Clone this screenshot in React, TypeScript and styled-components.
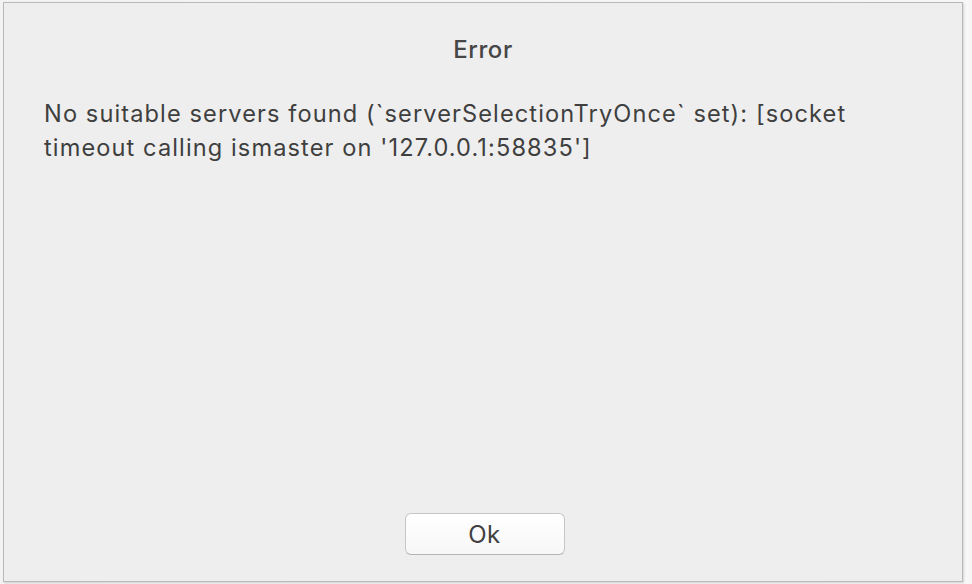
import React from "react";
import styled, { createGlobalStyle } from "styled-components";

const Global = createGlobalStyle`
  html, body { margin: 0; padding: 0; }
  body {
    width: 972px; height: 584px; overflow: hidden;
    background: #f6f6f6;
    font-family: Inter, "Noto Sans", "Liberation Sans", sans-serif;
  }
`;

const Page = styled.div`
  position: relative;
  width: 972px;
  height: 584px;
  overflow: hidden;
  background: linear-gradient(90deg, #f3f3f3, #f7f7f7);
`;

const BackTitle = styled.div`
  display: flex;
  align-items: flex-end;
  gap: 10px;
  height: 4px;
  overflow: visible;
  margin-top: -16px;
  font-size: 24px;
  line-height: 26px;
  color: #222;
  white-space: nowrap;
`;

const RedMark = styled.span`
  display: inline-block;
  width: 44px;
  height: 24px;
  border-left: 1px solid #e04040;
  border-right: 1px solid #e04040;
  margin-left: 8px;
`;

const Dialog = styled.div`
  position: absolute;
  left: 3px;
  top: 2px;
  width: 960px;
  height: 580px;
  box-sizing: border-box;
  background: #eeeeee;
  border: 1px solid #b9b9b9;
  box-shadow: 1px 1px 2px rgba(0,0,0,0.15);
  display: flex;
  flex-direction: column;
  align-items: stretch;
`;

const Title = styled.h1`
  margin: 33px 0 0;
  text-align: center;
  font-size: 24px;
  font-weight: 500;
  letter-spacing: 0.6px;
  line-height: 28px;
  color: #464646;
`;

const Message = styled.p`
  margin: 33px 0 0;
  padding: 0 38px 0 40px;
  font-size: 23.6px;
  letter-spacing: 1.1px;
  line-height: 34px;
  color: #3f3f3f;
  flex: 1;
`;

const Footer = styled.div`
  display: flex;
  justify-content: center;
  padding-bottom: 26px;
`;

const OkButton = styled.button`
  width: 160px;
  height: 42px;
  border-radius: 6px;
  border: 1px solid #c6c6c6;
  border-bottom-color: #b4b4b4;
  background: linear-gradient(#ffffff, #f7f7f7);
  font-family: inherit;
  font-size: 24px;
  letter-spacing: 0.6px;
  color: #404040;
  padding: 0;
  margin-left: 3px;
`;

export default function App() {
  return (
    <Page>
      <Global />
      <BackTitle>
        <span>al Modal Error</span>
        <RedMark />
      </BackTitle>
      <Dialog>
        <Title>Error</Title>
        <Message>
          No suitable servers found (`serverSelectionTryOnce` set): [socket timeout calling ismaster on '127.0.0.1:58835']
        </Message>
        <Footer>
          <OkButton>Ok</OkButton>
        </Footer>
      </Dialog>
    </Page>
  );
}
